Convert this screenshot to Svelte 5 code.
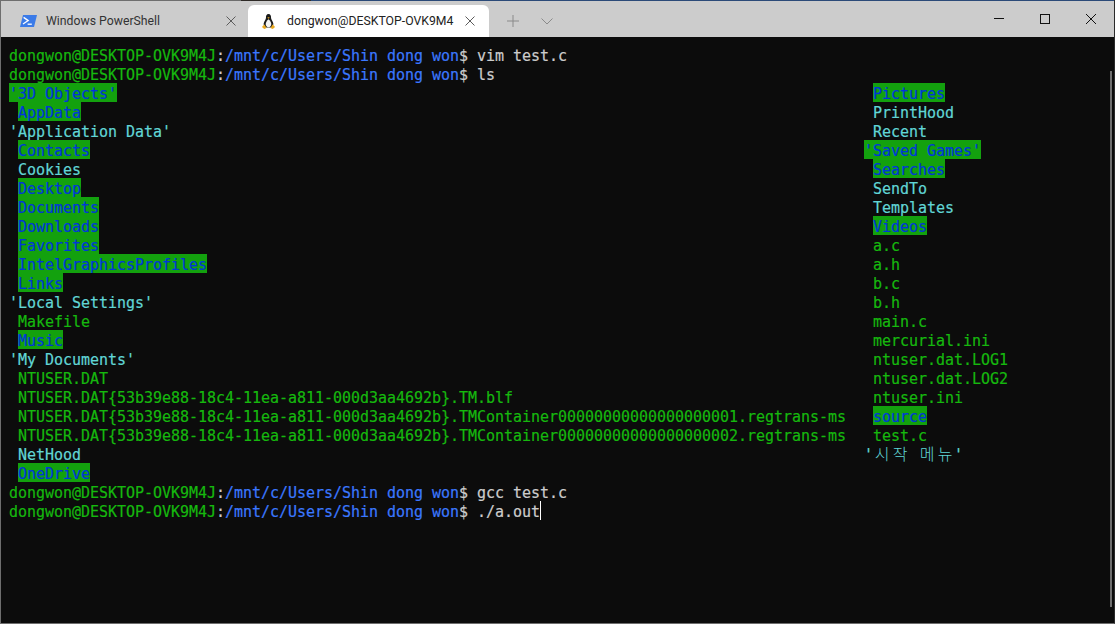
<script>
  const prompt = { user: 'dongwon@DESKTOP-OVK9M4J', path: '/mnt/c/Users/Shin dong won' };
  const left = [
    ["'3D Objects'", 'dir', 0],
    ['AppData', 'dir', 1],
    ["'Application Data'", 'link', 0],
    ['Contacts', 'dir', 1],
    ['Cookies', 'link', 1],
    ['Desktop', 'dir', 1],
    ['Documents', 'dir', 1],
    ['Downloads', 'dir', 1],
    ['Favorites', 'dir', 1],
    ['IntelGraphicsProfiles', 'dir', 1],
    ['Links', 'dir', 1],
    ["'Local Settings'", 'link', 0],
    ['Makefile', 'file', 1],
    ['Music', 'dir', 1],
    ["'My Documents'", 'link', 0],
    ['NTUSER.DAT', 'file', 1],
    ['NTUSER.DAT{53b39e88-18c4-11ea-a811-000d3aa4692b}.TM.blf', 'file', 1],
    ['NTUSER.DAT{53b39e88-18c4-11ea-a811-000d3aa4692b}.TMContainer00000000000000000001.regtrans-ms', 'file', 1],
    ['NTUSER.DAT{53b39e88-18c4-11ea-a811-000d3aa4692b}.TMContainer00000000000000000002.regtrans-ms', 'file', 1],
    ['NetHood', 'link', 1],
    ['OneDrive', 'dir', 1]
  ];
  const right = [
    ['Pictures', 'dir', 1],
    ['PrintHood', 'link', 1],
    ['Recent', 'link', 1],
    ["'Saved Games'", 'dir', 0],
    ['Searches', 'dir', 1],
    ['SendTo', 'link', 1],
    ['Templates', 'link', 1],
    ['Videos', 'dir', 1],
    ['a.c', 'file', 1],
    ['a.h', 'file', 1],
    ['b.c', 'file', 1],
    ['b.h', 'file', 1],
    ['main.c', 'file', 1],
    ['mercurial.ini', 'file', 1],
    ['ntuser.dat.LOG1', 'file', 1],
    ['ntuser.dat.LOG2', 'file', 1],
    ['ntuser.ini', 'file', 1],
    ['source', 'dir', 1],
    ['test.c', 'file', 1]
  ];
  const hangul = ['시', '작', null, '메', '뉴'];
</script>

{#snippet promptLine(cmd, cursor)}
  <div class="row"><span class="user">{prompt.user}</span><span class="plain">:</span><span class="path">{prompt.path}</span><span class="plain">$ {cmd}</span>{#if cursor}<span class="cursor"></span>{/if}</div>
{/snippet}

{#snippet entry(item)}
  <div class="row" class:indent={item[2]}><span class={item[1]}>{item[0]}</span></div>
{/snippet}

<div class="window">
  <div class="wallpaper"></div>
  <header class="titlebar">
    <div class="tabs">
      <div class="tab">
        <svg class="tabicon" width="17" height="12" viewBox="0 0 17 12">
          <path d="M3 0H17L14 12H0Z" fill="#3b7be8"/>
          <path d="M3.6 2.4 8.2 5.6 3 9" fill="none" stroke="#fff" stroke-width="1.3"/>
          <path d="M7.6 9.2H11.8" stroke="#fff" stroke-width="1.3"/>
        </svg>
        <span class="tabtitle">Windows PowerShell</span>
        <svg class="close" width="10" height="10" viewBox="0 0 10 10"><path d="M.5.5 9.5 9.5M9.5.5.5 9.5" stroke="#5c5c5c" stroke-width="1"/></svg>
      </div>
      <div class="tab active">
        <svg class="tabicon penguin" width="15" height="17" viewBox="0 0 16 17">
          <path d="M8 .5C5.8.5 5.2 2.4 5.3 4.4 5.4 6 3.4 8 2.9 10.3 2.6 12 3.4 14 5 15H11C12.6 14 13.4 12 13.1 10.3 12.6 8 10.6 6 10.7 4.4 10.8 2.4 10.2.5 8 .5Z" fill="#1a1a1a"/>
          <path d="M8 6C6.4 7.4 5 9.4 5 11.2 5 13 6.2 14.6 8 14.6S11 13 11 11.2C11 9.4 9.6 7.4 8 6Z" fill="#f4f4f4"/>
          <path d="M6.8 4.4C7.4 3.9 8.6 3.9 9.2 4.4L8 5.6Z" fill="#e8a820"/>
          <path d="M1.4 13.6 3.8 11.8 5.8 15.4 3.8 16.6 1.6 15.2ZM14.6 13.6 12.2 11.8 10.2 15.4 12.2 16.6 14.4 15.2Z" fill="#e8a820"/>
        </svg>
        <span class="tabtitle">dongwon@DESKTOP-OVK9M4</span>
        <svg class="close" width="10" height="10" viewBox="0 0 10 10"><path d="M.5.5 9.5 9.5M9.5.5.5 9.5" stroke="#5c5c5c" stroke-width="1"/></svg>
      </div>
      <div class="newtab">
        <svg width="12" height="12" viewBox="0 0 12 12"><path d="M6 0V12M0 6H12" stroke="#8a8a8a" stroke-width="1"/></svg>
        <svg width="12" height="7" viewBox="0 0 12 7"><path d="M.5.5 6 6 11.5.5" fill="none" stroke="#8a8a8a" stroke-width="1"/></svg>
      </div>
    </div>
    <div class="controls">
      <svg width="10" height="10" viewBox="0 0 10 10"><path d="M0 4.5H10" stroke="#111" stroke-width="1"/></svg>
      <svg width="10" height="10" viewBox="0 0 10 10"><rect x=".5" y=".5" width="9" height="9" fill="none" stroke="#111" stroke-width="1"/></svg>
      <svg width="10" height="10" viewBox="0 0 10 10"><path d="M0 0 10 10M10 0 0 10" stroke="#111" stroke-width="1"/></svg>
    </div>
  </header>

  <main class="terminal">
    {@render promptLine('vim test.c', false)}
    {@render promptLine('ls', false)}
    <div class="listing">
      <div class="column first">
        {#each left as item}{@render entry(item)}{/each}
      </div>
      <div class="column">
        {#each right as item}{@render entry(item)}{/each}
        <div class="row link"><span>'</span>{#each hangul as h}{#if h}<span class="wide">{h}</span>{:else}<span class="gap"></span>{/if}{/each}<span>'</span></div>
      </div>
    </div>
    {@render promptLine('gcc test.c', false)}
    {@render promptLine('./a.out', true)}
    <div class="scrollbar"></div>
  </main>
</div>

<style>
  :global(body) {
    margin: 0;
    background: #0c0c0c;
  }
  .window {
    width: 1115px;
    height: 624px;
    display: flex;
    flex-direction: column;
    overflow: hidden;
    box-sizing: border-box;
    border-left: 1px solid #6e6e6e;
    border-right: 1px solid #2a2a2a;
    border-bottom: 1px solid #6e6e6e;
  }
  .wallpaper {
    height: 1px;
    flex: none;
    background: linear-gradient(to right, #6e6e6e 0 240px, #2e2a26 240px 310px, #2b4a78 310px);
  }
  .titlebar {
    height: 36px;
    flex: none;
    background: #cccccc;
    display: flex;
    justify-content: space-between;
  }
  .tabs {
    display: flex;
    padding-top: 4px;
  }
  .tab {
    width: 247px;
    height: 32px;
    box-sizing: border-box;
    display: flex;
    align-items: center;
    padding: 0 12px 0 19px;
    font: 12.25px "Roboto", "Liberation Sans", sans-serif;
    color: #333;
  }
  .tab.active {
    width: 241px;
    background: #fff;
    border-radius: 6px 6px 0 0;
    color: #222;
    padding: 0 14px 0 13px;
  }
  .tabicon {
    flex: none;
    margin-right: 9px;
  }
  .penguin {
    margin-right: 11px;
  }
  .tabtitle {
    flex: 1;
    white-space: nowrap;
  }
  .close {
    flex: none;
  }
  .newtab {
    display: flex;
    align-items: center;
    gap: 22px;
    padding-left: 18px;
  }
  .controls {
    display: flex;
    align-items: center;
    gap: 36px;
    padding-right: 18px;
    height: 36px;
    box-sizing: border-box;
  }
  .terminal {
    position: relative;
    flex: 1;
    background: #0c0c0c;
    padding: 8px 0 0 8px;
    font: 15px/22px "DejaVu Sans Mono", monospace;
    letter-spacing: -0.03px;
    -webkit-text-stroke: 0.2px;
    color: #cccccc;
  }
  .row {
    height: 19px;
    white-space: pre;
  }
  .indent {
    padding-left: 9px;
  }
  .listing {
    display: flex;
  }
  .column.first {
    width: 855px;
  }
  .user {
    color: #16b80e;
  }
  .path {
    color: #3b78ff;
  }
  .plain {
    color: #cccccc;
  }
  .dir {
    display: block;
    width: fit-content;
    height: 19px;
    background: #13a10e;
    color: #0037da;
  }
  .link {
    color: #61d6d6;
  }
  .file {
    color: #16b80e;
  }
  .wide {
    display: inline-block;
    width: 18px;
    text-align: center;
    font-family: "Noto Sans CJK KR", sans-serif;
    font-size: 16px;
    font-weight: 300;
    line-height: 19px;
    -webkit-text-stroke: 0;
  }
  .gap {
    display: inline-block;
    width: 9px;
  }
  .cursor {
    display: inline-block;
    width: 1px;
    height: 19px;
    background: #fff;
    vertical-align: top;
  }
  .scrollbar {
    position: absolute;
    right: 2px;
    top: 34px;
    bottom: 16px;
    width: 2px;
    background: #6f6f6f;
  }
</style>
